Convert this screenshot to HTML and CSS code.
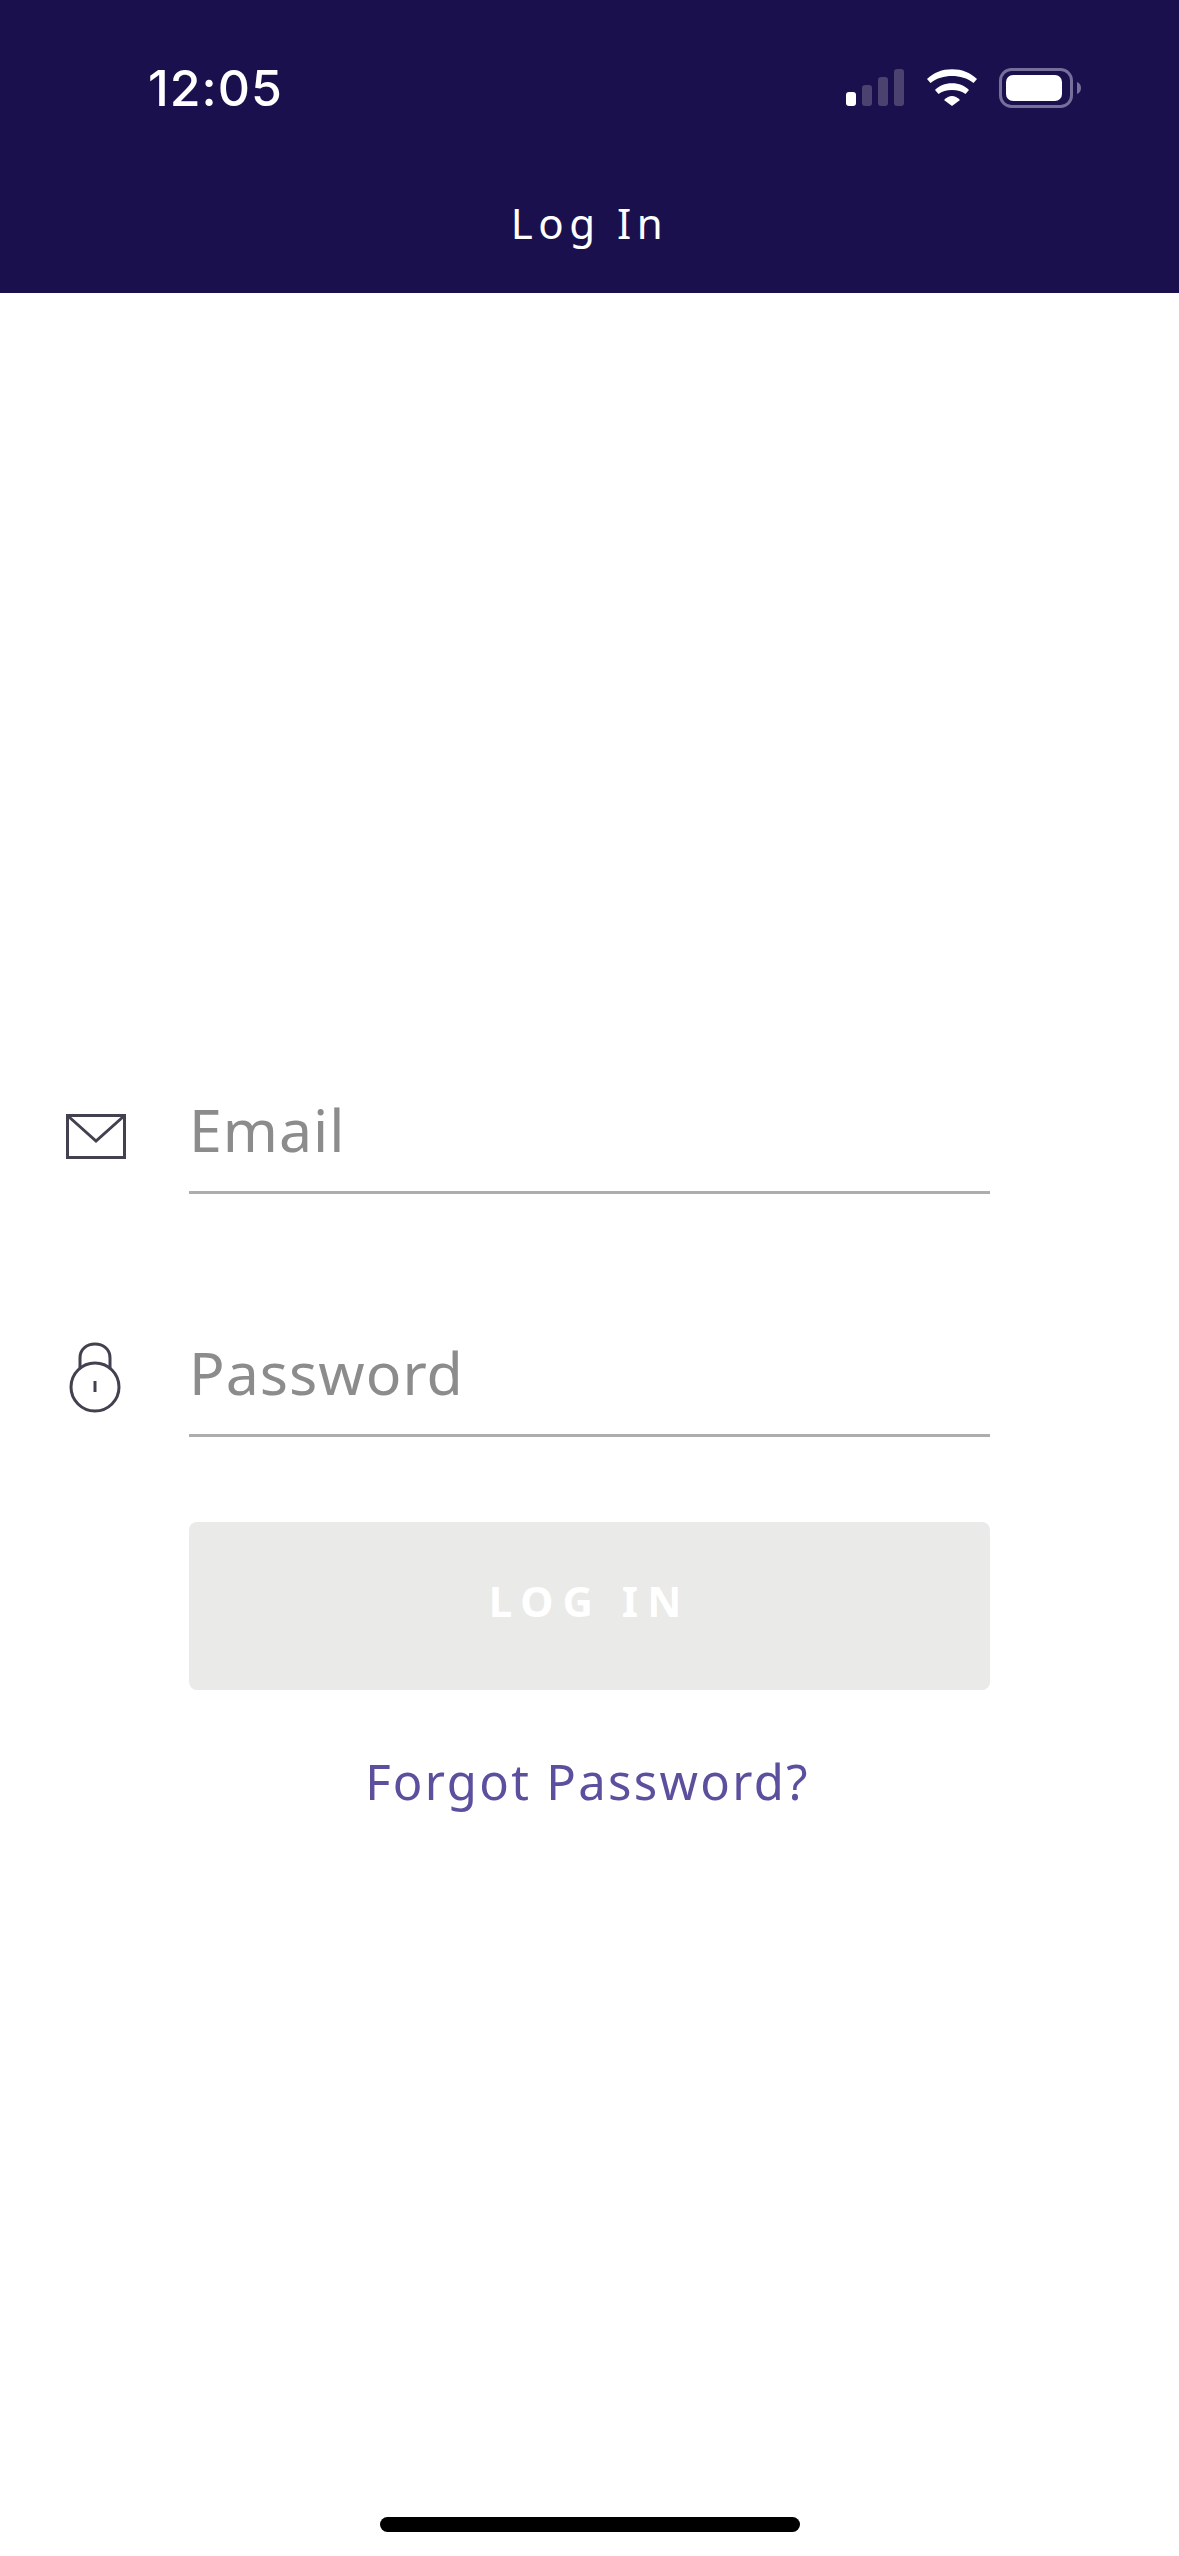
FILE: index.html
```html
<!DOCTYPE html>
<html lang="en">

<head>
    <meta charset="UTF-8">
    <meta name="viewport" content="width=device-width, initial-scale=1.0">
    <title>Log In</title>
    <link rel="stylesheet" href="styles.css">
</head>

<body>
    <div class="page">
        <div class="header">
            <div class="status-bar">
                <span class="time">12:05</span>
                <div class="status-icons">
                    <svg class="signal" width="58" height="38" viewBox="0 0 58 38">
                        <rect x="0" y="23" width="10" height="14" rx="3" fill="#fff" />
                        <rect x="16" y="16" width="10" height="21" rx="3" fill="#4b4270" />
                        <rect x="32" y="8" width="10" height="29" rx="3" fill="#4b4270" />
                        <rect x="48" y="0" width="10" height="37" rx="3" fill="#4b4270" />
                    </svg>
                    <svg class="wifi" width="52" height="38" viewBox="0 0 52 38">
                        <path fill="#fff" d="M1 10C8 3.500 16 .3 26 .3S44 3.500 51 10L47.500 14C41 9 34 7 26 7S11 9 4.500 14Z" />
                        <path fill="#fff" d="M9 21C13 17 19 14.300 26 14.300S39 17 43 21L39.500 25C36 22.500 31.500 21 26 21S16 22.500 12.500 25Z" />
                        <path fill="#fff" d="M18 31Q26 23 34 31L26 37Z" />
                    </svg>
                    <svg class="battery" width="83" height="40" viewBox="0 0 83 40">
                        <rect x="1.500" y="1.500" width="71" height="37" rx="11" fill="none" stroke="#75709a" stroke-width="3" />
                        <rect x="7" y="7" width="56" height="26" rx="7" fill="#fff" />
                        <path fill="#75709a" d="M78 14C81 15 82 17.500 82 20S81 25 78 26Z" />
                    </svg>
                </div>
            </div>
            <div class="title">Log In</div>
        </div>

        <div class="login-form">
            <div class="form-row">
                <div class="icon-slot">
                    <svg class="icon-mail" width="60" height="45" viewBox="0 0 60 45">
                        <rect x="1.500" y="1.500" width="57" height="42" fill="none" stroke="#43414f" stroke-width="3" />
                        <path d="M2 2L30 27L58 2" fill="none" stroke="#43414f" stroke-width="3" />
                    </svg>
                </div>
                <input class="field" type="email" placeholder="Email">
            </div>
            <div class="form-row">
                <div class="icon-slot">
                    <svg class="icon-lock" width="52" height="72" viewBox="0 0 52 72">
                        <path d="M11 27V16C11 7 18 2 26 2S41 7 41 16V27" fill="none" stroke="#43414f" stroke-width="3" />
                        <circle cx="26" cy="45" r="24" fill="none" stroke="#43414f" stroke-width="3" />
                        <path d="M26 39V50" fill="none" stroke="#43414f" stroke-width="3" />
                    </svg>
                </div>
                <input class="field" type="password" placeholder="Password">
            </div>
            <button class="login-btn" disabled>LOG IN</button>
            <a class="forgot-link" href="#">Forgot Password?</a>
        </div>

        <div class="home-indicator"></div>
    </div>
</body>

</html>
```
FILE: styles.css
```css
* {
    margin: 0;
    padding: 0;
    box-sizing: border-box;
}

body {
    font-family: "Noto Sans", "Open Sans", sans-serif;
    background: white;
}

.page {
    display: flex;
    flex-direction: column;
    width: 1179px;
    height: 2556px;
    overflow: hidden;
}

.header {
    height: 293px;
    background: #1a104e;
    color: white;
}

.status-bar {
    display: flex;
    justify-content: space-between;
    align-items: flex-start;
    height: 175px;
    padding: 0 97px 0 148px;
}

.time {
    margin-top: 58px;
    font-family: Inter, sans-serif;
    font-size: 50px;
    line-height: 60px;
    font-weight: 500;
    letter-spacing: 1px;
}

.status-icons {
    display: flex;
    align-items: flex-start;
    gap: 22px;
    margin-top: 68px;
}

.signal,
.wifi {
    margin-top: 1px;
}

.battery {
    margin-left: -1px;
}

.title {
    margin-top: 19px;
    text-align: center;
    font-size: 42px;
    line-height: 57px;
    letter-spacing: 5.500px;
}

.login-form {
    display: flex;
    flex-direction: column;
    padding-top: 801px;
}

.form-row {
    display: flex;
    width: 990px;
    height: 100px;
    margin-bottom: 143px;
}

.form-row + .form-row {
    margin-bottom: 85px;
}

.icon-slot {
    flex: 0 0 189px;
}

.icon-mail {
    margin: 20px 0 0 66px;
}

.icon-lock {
    margin: 5px 0 0 69px;
}

.field {
    flex: 1;
    min-width: 0;
    padding-bottom: 28px;
    border: none;
    border-bottom: 3px solid #adadad;
    outline: none;
    background: none;
    font-family: inherit;
    font-size: 59px;
    letter-spacing: 1px;
    color: #333;
}

.field::placeholder {
    color: #8c8c8c;
    opacity: 1;
}

.login-btn {
    width: 801px;
    height: 168px;
    margin-left: 189px;
    padding-bottom: 12px;
    border: none;
    border-radius: 8px;
    background: #eaeae8;
    color: white;
    font-family: inherit;
    font-size: 42px;
    font-weight: 700;
    letter-spacing: 9px;
}

.forgot-link {
    width: 801px;
    margin: 58px 0 0 187px;
    text-align: center;
    color: #5b4f9e;
    font-size: 49px;
    line-height: 67px;
    letter-spacing: 2.300px;
    text-decoration: none;
}

.home-indicator {
    width: 420px;
    height: 15px;
    margin: auto auto 24px;
    border-radius: 8px;
    background: black;
}
```
